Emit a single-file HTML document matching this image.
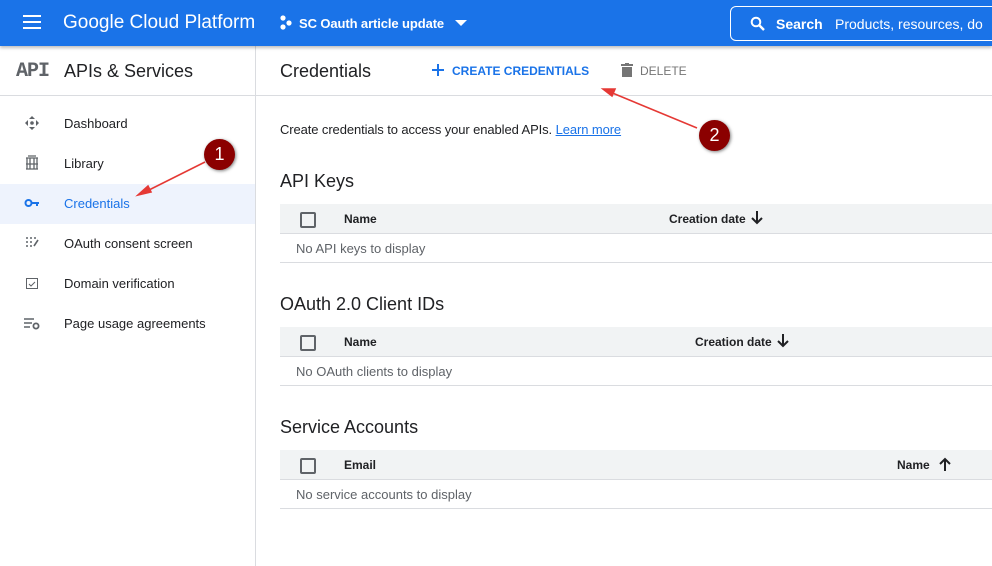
<!DOCTYPE html>
<html><head><meta charset="utf-8"><style>
*{margin:0;padding:0;box-sizing:border-box}
body{width:992px;height:566px;overflow:hidden;font-family:"Liberation Sans",Arial,sans-serif;background:#fff;position:relative;color:#202124}
.a{position:absolute;white-space:nowrap}
.hdr{position:absolute;left:0;top:0;width:992px;height:46px;background:#1a73e8;box-shadow:0 2px 3px rgba(0,0,0,.25);z-index:2}
.side{position:absolute;left:255px;top:46px;width:1px;height:520px;background:#dadce0}
.nav{position:absolute;left:0;width:255px;height:40px;font-size:13px;color:#202124}
.nav span{position:absolute;left:64px;top:13px}
.nav svg{position:absolute;left:24px;top:12px}
.th{position:absolute;left:280px;width:712px;height:30px;background:#f1f3f4;border-bottom:1px solid #dadce0;font-size:12px;font-weight:bold;color:#202124}
.th .cb{position:absolute;left:20px;top:8px;width:16px;height:16px;border:2px solid #5f6368;border-radius:2px}
.tr{position:absolute;left:280px;width:712px;height:29px;border-bottom:1px solid #dadce0;font-size:13px;color:#5f6368}
.tr span{position:absolute;left:16px;top:7px}
h2{position:absolute;left:280px;font-size:18px;font-weight:normal;color:#202124}
.badge{position:absolute;width:31px;height:31px;border-radius:50%;background:#8b0000;color:#fff;font-size:18px;text-align:center;line-height:31px;box-shadow:1px 1px 3px rgba(0,0,0,.5)}
</style></head><body>
<div class="hdr">
 <svg class="a" style="left:23px;top:15px" width="18" height="14"><rect y="0" width="18" height="2" fill="#fff"/><rect y="6" width="18" height="2" fill="#fff"/><rect y="12" width="18" height="2" fill="#fff"/></svg>
 <div class="a" style="left:63px;top:12px;font-size:19px;color:#fff">Google Cloud Platform</div>
 <svg class="a" style="left:279px;top:15px" width="14" height="16"><circle cx="4" cy="3" r="2.6" fill="#fff"/><circle cx="4" cy="12" r="2.6" fill="#fff"/><circle cx="10" cy="8" r="2.6" fill="#fff"/></svg>
 <div class="a" style="left:299px;top:16px;font-size:13px;font-weight:bold;color:#fff;letter-spacing:-0.1px">SC Oauth article update</div>
 <svg class="a" style="left:455px;top:20px" width="12" height="7"><path d="M0 0H12L6 6Z" fill="#fff"/></svg>
 <div class="a" style="left:730px;top:6px;width:280px;height:35px;border:1px solid #fff;border-radius:6px"></div>
 <svg class="a" style="left:750px;top:16px" width="15" height="15"><circle cx="6" cy="6" r="4.3" stroke="#fff" stroke-width="2" fill="none"/><path d="M9 9L14 14" stroke="#fff" stroke-width="2.4"/></svg>
 <div class="a" style="left:776px;top:16px;font-size:14px;font-weight:bold;color:#fff">Search</div>
 <div class="a" style="left:835px;top:16px;font-size:14px;color:#fff">Products, resources, do</div>
</div>
<div class="side"></div>
<div class="a" style="left:0;top:95px;width:992px;height:1px;background:#dadce0"></div>
<div class="a" style="left:16px;top:60px;font-family:'Liberation Mono',monospace;font-weight:bold;font-size:20px;color:#5f6368;letter-spacing:-1px">API</div>
<div class="a" style="left:64px;top:61px;font-size:18px">APIs &amp; Services</div>
<div class="a" style="left:280px;top:61px;font-size:18px">Credentials</div>
<svg class="a" style="left:432px;top:64px" width="12" height="12"><path d="M6 0V12M0 6H12" stroke="#1a73e8" stroke-width="2"/></svg>
<div class="a" style="left:452px;top:64px;font-size:12px;font-weight:bold;color:#1a73e8">CREATE CREDENTIALS</div>
<svg class="a" style="left:621px;top:63px" width="12" height="14"><rect x="0" y="1" width="12" height="2" fill="#757575"/><rect x="4" y="0" width="4" height="2" fill="#757575"/><rect x="1" y="4" width="10" height="10" fill="#757575"/></svg>
<div class="a" style="left:640px;top:64px;font-size:12px;color:#757575">DELETE</div>

<div class="a" style="left:0;top:184px;width:255px;height:40px;background:#eef3fd"></div>
<div class="nav" style="top:103px"><svg width="16" height="16"><path d="M8 1L11 4H5ZM8 15L5 12H11ZM1 8L4 5V11ZM15 8L12 11V5Z" fill="#5f6368"/><circle cx="8" cy="8" r="1.8" fill="#5f6368"/></svg><span>Dashboard</span></div>
<div class="nav" style="top:143px"><svg width="16" height="16"><path d="M2 3h12M2 9h12M2 14h12M3 3v11M6 3v11M10 3v11M13 3v11M4 1h8" stroke="#5f6368" stroke-width="1.3" fill="none"/></svg><span>Library</span></div>
<div class="nav" style="top:183px"><svg width="16" height="16"><circle cx="4.5" cy="8" r="3" stroke="#1a73e8" stroke-width="2" fill="none"/><path d="M7 7h8v2h-1v2h-2v-2H7z" fill="#1a73e8"/></svg><span style="color:#1a73e8">Credentials</span></div>
<div class="nav" style="top:223px"><svg width="16" height="16"><path d="M2 3h2M6 3h2M10 3h2M2 7h2M6 7h2M2 11h2M6 11h2M10 11l4-6" stroke="#5f6368" stroke-width="1.6" fill="none"/></svg><span>OAuth consent screen</span></div>
<div class="nav" style="top:263px"><svg width="16" height="16"><rect x="2.5" y="3.5" width="11" height="10" stroke="#5f6368" fill="none"/><path d="M5 9l2 2 4-4" stroke="#5f6368" fill="none"/></svg><span>Domain verification</span></div>
<div class="nav" style="top:303px"><svg width="16" height="16"><path d="M0 4h10M0 8h8M0 12h6" stroke="#5f6368" stroke-width="1.5"/><circle cx="12" cy="11" r="2.6" stroke="#5f6368" stroke-width="1.8" fill="none"/></svg><span>Page usage agreements</span></div>

<div class="a" style="left:280px;top:122px;font-size:13px;letter-spacing:-0.1px">Create credentials to access your enabled APIs. <span style="color:#1a73e8;text-decoration:underline">Learn more</span></div>

<h2 style="top:171px">API Keys</h2>
<div class="th" style="top:204px"><div class="cb"></div><span class="a" style="left:64px;top:8px">Name</span><span class="a" style="left:389px;top:8px">Creation date</span><svg class="a" style="left:471px;top:7px" width="12" height="14"><path d="M6 0V12M1 7L6 12L11 7" stroke="#202124" stroke-width="2" fill="none"/></svg></div>
<div class="tr" style="top:234px"><span>No API keys to display</span></div>

<h2 style="top:294px">OAuth 2.0 Client IDs</h2>
<div class="th" style="top:327px"><div class="cb"></div><span class="a" style="left:64px;top:8px">Name</span><span class="a" style="left:415px;top:8px">Creation date</span><svg class="a" style="left:497px;top:7px" width="12" height="14"><path d="M6 0V12M1 7L6 12L11 7" stroke="#202124" stroke-width="2" fill="none"/></svg></div>
<div class="tr" style="top:357px"><span>No OAuth clients to display</span></div>

<h2 style="top:417px">Service Accounts</h2>
<div class="th" style="top:450px"><div class="cb"></div><span class="a" style="left:64px;top:8px">Email</span><span class="a" style="left:617px;top:8px">Name</span><svg class="a" style="left:659px;top:7px" width="12" height="14"><path d="M6 14V2M1 7L6 2L11 7" stroke="#202124" stroke-width="2" fill="none"/></svg></div>
<div class="tr" style="top:480px"><span>No service accounts to display</span></div>

<svg class="a" style="left:0;top:0" width="992" height="566"><g stroke="#e53935" stroke-width="1.6" fill="#e53935"><path d="M205 162L145 192"/><path d="M138 195l10-9 3 6z"/><path d="M697 128L610 92"/><path d="M603 89l12 0-3 7z"/></g></svg>
<div class="badge" style="left:204px;top:139px">1</div>
<div class="badge" style="left:699px;top:120px">2</div>
</body></html>
